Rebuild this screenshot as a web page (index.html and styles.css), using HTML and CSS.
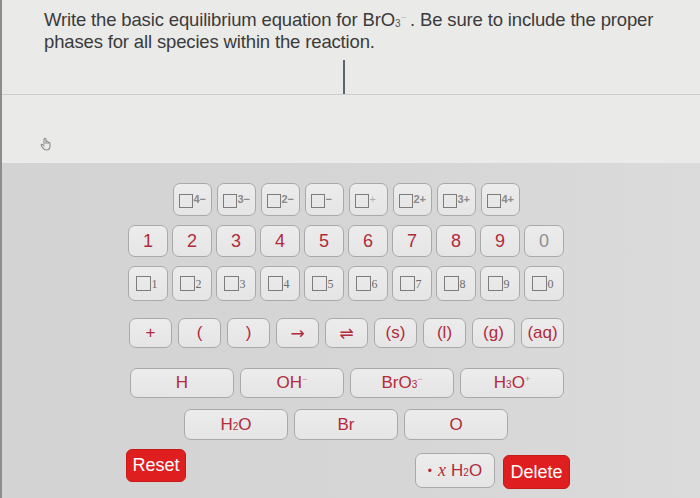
FILE: index.html
```html
<!DOCTYPE html>
<html>
<head>
<meta charset="utf-8">
<link rel="stylesheet" href="styles.css">
</head>
<body>
<div class="screen">
  <section class="question">
    <p class="prompt">Write the basic equilibrium equation for BrO<span class="qsub">3</span><span class="qsup">−</span>. Be sure to include the proper phases for all species within the reaction.</p>
    <div class="answer"><span class="cursor"></span></div>
    <div class="tools">
      <svg class="hand" width="12" height="14" viewBox="0 0 12 14"><path d="M4 7V2.2a1 1 0 0 1 2 0V6.5M6 6V5a1 1 0 0 1 2 0v1.5M8 6.2a1 1 0 0 1 2 0V9c0 2.5-1.6 4-3.6 4C4.6 13 3.6 12 2.6 10.6L1.3 8.7a.9.9 0 0 1 1.4-1.1L4 9" fill="none" stroke="#8d8d8d" stroke-width="1.1" stroke-linecap="round" stroke-linejoin="round"/></svg>
    </div>
  </section>
  <section class="pad">
    <div class="row r1">
      <button class="k sup-k"><span class="box"></span><span class="ch">4−</span></button>
      <button class="k sup-k"><span class="box"></span><span class="ch">3−</span></button>
      <button class="k sup-k"><span class="box"></span><span class="ch">2−</span></button>
      <button class="k sup-k"><span class="box"></span><span class="ch">−</span></button>
      <button class="k sup-k"><span class="box"></span><span class="ch light">+</span></button>
      <button class="k sup-k"><span class="box"></span><span class="ch">2+</span></button>
      <button class="k sup-k"><span class="box"></span><span class="ch">3+</span></button>
      <button class="k sup-k"><span class="box"></span><span class="ch">4+</span></button>
    </div>
    <div class="row r2">
      <button class="k num">1</button>
      <button class="k num">2</button>
      <button class="k num">3</button>
      <button class="k num">4</button>
      <button class="k num">5</button>
      <button class="k num">6</button>
      <button class="k num">7</button>
      <button class="k num">8</button>
      <button class="k num">9</button>
      <button class="k num zero">0</button>
    </div>
    <div class="row r3">
      <button class="k sub-k"><span class="box"></span><span class="ix">1</span></button>
      <button class="k sub-k"><span class="box"></span><span class="ix">2</span></button>
      <button class="k sub-k"><span class="box"></span><span class="ix">3</span></button>
      <button class="k sub-k"><span class="box"></span><span class="ix">4</span></button>
      <button class="k sub-k"><span class="box"></span><span class="ix">5</span></button>
      <button class="k sub-k"><span class="box"></span><span class="ix">6</span></button>
      <button class="k sub-k"><span class="box"></span><span class="ix">7</span></button>
      <button class="k sub-k"><span class="box"></span><span class="ix">8</span></button>
      <button class="k sub-k"><span class="box"></span><span class="ix">9</span></button>
      <button class="k sub-k"><span class="box"></span><span class="ix">0</span></button>
    </div>
    <div class="row r4">
      <button class="k op">+</button>
      <button class="k op">(</button>
      <button class="k op">)</button>
      <button class="k op arrow">→</button>
      <button class="k op arrow">⇌</button>
      <button class="k op">(s)</button>
      <button class="k op">(l)</button>
      <button class="k op">(g)</button>
      <button class="k op">(aq)</button>
    </div>
    <div class="row r5">
      <button class="k sp">H</button>
      <button class="k sp">OH<span class="fsup">−</span></button>
      <button class="k sp">BrO<span class="fsub">3</span><span class="fsup">−</span></button>
      <button class="k sp">H<span class="fsub">3</span>O<span class="fsup">+</span></button>
    </div>
    <div class="row r6">
      <button class="k sp">H<span class="fsub">2</span>O</button>
      <button class="k sp">Br</button>
      <button class="k sp">O</button>
    </div>
    <div class="row r7">
      <button class="red reset">Reset</button>
      <button class="k hydrate"><span class="dot">•</span><span class="xv">x</span><span>H</span><span class="fsub">2</span><span>O</span></button>
      <button class="red delete">Delete</button>
    </div>
  </section>
</div>
</body>
</html>
```

FILE: styles.css
```css
* { box-sizing: border-box; }
html, body { margin: 0; padding: 0; }
body {
  width: 700px;
  height: 498px;
  overflow: hidden;
  font-family: "Liberation Sans", Arial, sans-serif;
  background: #d4d4d4;
}
.screen {
  width: 700px;
  height: 498px;
  border-left: 2px solid #8c8c8c;
  display: flex;
  flex-direction: column;
}
.question {
  height: 163px;
  background: #eaeae8;
  display: flex;
  flex-direction: column;
}
.prompt {
  margin: 0;
  padding: 9px 6px 0 42px;
  font-size: 18.5px;
  line-height: 22px;
  color: #3b3b3b;
  letter-spacing: -0.15px;
}
.qsub {
  font-size: 10px;
  line-height: 0;
  vertical-align: -1px;
  color: #555;
}
.qsup {
  font-size: 10px;
  line-height: 0;
  vertical-align: 5px;
  color: #bbb;
  margin: 0 3px 0 1px;
}
.answer {
  height: 42px;
  border-bottom: 1px solid #cdcdcb;
  flex-shrink: 0;
}
.cursor {
  display: block;
  width: 1.5px;
  height: 34px;
  margin: 7px 0 0 341px;
  background: #5a6470;
}
.tools {
  flex: 1;
  padding: 42px 0 0 38px;
}
.hand { display: block; }

.pad {
  flex: 1;
  background: linear-gradient(90deg, #d3d3d3 0%, #d6d6d6 60%, #dbdbdb 100%);
  padding-top: 20px;
}
.row {
  display: flex;
  align-items: flex-start;
}
.k {
  font-family: "Liberation Sans", Arial, sans-serif;
  background: linear-gradient(#ececec, #e5e5e5);
  border: 1px solid #a9a9a9;
  border-radius: 7px;
  padding: 0;
  margin: 0;
  display: inline-flex;
  align-items: center;
  justify-content: center;
  color: #b12b3c;
  flex-shrink: 0;
}
.box {
  display: inline-block;
  border: 1.5px solid #7c7c7c;
  background: transparent;
}

.r1 { margin-left: 171px; gap: 5px; }
.sup-k { width: 39px; height: 33px; padding-top: 3px; }
.sup-k .box { width: 14px; height: 14px; }
.sup-k .ch {
  font-size: 11px;
  font-weight: bold;
  color: #8a8a8a;
  align-self: flex-start;
  margin-top: 6px;
  margin-left: 1px;
  width: 13px;
  text-align: left;
}
.sup-k .ch.light { font-weight: normal; color: #b0b0b0; }

.r2 { margin-top: 9px; margin-left: 126px; gap: 4px; }
.num { width: 40px; height: 32px; font-size: 18px; }
.num.zero { color: #8f8f8f; }

.r3 { margin-top: 9px; margin-left: 126px; gap: 4px; }
.sub-k { width: 40px; height: 35px; padding-right: 3px; }
.sub-k .box { width: 15px; height: 15px; }
.sub-k .ix {
  font-family: "Liberation Serif", "Times New Roman", serif;
  font-size: 12px;
  color: #6b6b6b;
  align-self: flex-end;
  margin-bottom: 8px;
  margin-left: 1px;
}

.r4 { margin-top: 17px; margin-left: 127px; gap: 6px; }
.op { width: 43px; height: 30px; font-size: 17px; }
.op.arrow { font-family: "DejaVu Sans", sans-serif; font-size: 17px; }

.r5 { margin-top: 20px; margin-left: 128px; gap: 6px; }
.r6 { margin-top: 11px; margin-left: 182px; gap: 6px; }
.sp { width: 104px; height: 30px; font-size: 17px; }
.r6 .sp { height: 31px; }
.fsub { font-size: 10px; align-self: flex-end; margin-bottom: 7px; }
.fsup { font-size: 9px; align-self: flex-start; margin-top: 5px; color: #c98a94; }

.r7 { margin-top: 9px; margin-left: 124px; }
.red {
  font-family: "Liberation Sans", Arial, sans-serif;
  background: #df1f1f;
  color: #fff;
  border: 1px solid #c81818;
  border-radius: 6px;
  font-size: 18px;
  padding: 0;
  flex-shrink: 0;
}
.reset { width: 60px; height: 33px; }
.hydrate { width: 80px; height: 35px; margin-left: 229px; margin-top: 4px; font-size: 17px; }
.hydrate .dot { font-size: 12px; margin-right: 6px; }
.hydrate .xv { font-family: "Liberation Serif", "Times New Roman", serif; font-style: italic; font-size: 18px; margin-right: 5px; }
.hydrate .fsub { margin-bottom: 9px; }
.delete { width: 67px; height: 34px; margin-left: 8px; margin-top: 6px; }
```
